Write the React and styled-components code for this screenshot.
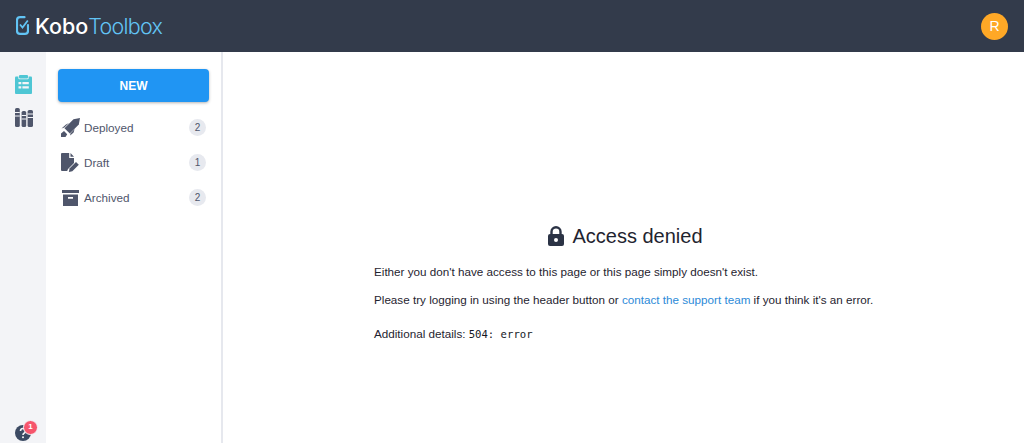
import React from 'react';
import styled, { createGlobalStyle } from 'styled-components';

const GlobalStyle = createGlobalStyle`
    html, body {
        margin: 0;
        padding: 0;
        height: 100%;
        background: #fff;
        font-family: 'Liberation Sans', Arial, sans-serif;
        overflow: hidden;
    }
    #root {
        height: 100%;
    }
`;

const Page = styled.div`
    display: flex;
    flex-direction: column;
    height: 443px;
`;

const Header = styled.header`
    display: flex;
    align-items: center;
    justify-content: space-between;
    flex: 0 0 52px;
    height: 52px;
    padding: 0 16px;
    box-sizing: border-box;
    background: #333b4b;
`;

const Logo = styled.div`
    display: flex;
    align-items: center;
    gap: 6px;
    margin-top: -1px;
`;

const LogoText = styled.div`
    font-family: 'Inter', sans-serif;
    font-size: 21.5px;
    line-height: 26px;
    letter-spacing: -0.75px;
    color: #62c4f5;
    font-weight: 300;
`;

const LogoStrong = styled.span`
    color: #fff;
    font-weight: 500;
    letter-spacing: 0;
`;

const Avatar = styled.div`
    display: flex;
    align-items: center;
    justify-content: center;
    width: 27px;
    height: 27px;
    border-radius: 50%;
    background: #ffa826;
    color: #fff;
    font-size: 14px;
`;

const Body = styled.div`
    display: flex;
    flex: 1;
    min-height: 0;
`;

const Rail = styled.nav`
    display: flex;
    flex-direction: column;
    align-items: center;
    flex: 0 0 46px;
    padding: 23px 0 0 1px;
    box-sizing: border-box;
    background: #f3f4f7;
`;

const RailButton = styled.div`
    display: flex;
    justify-content: center;
    width: 100%;
    height: 20px;
    margin-bottom: 13px;
`;

const HelpButton = styled.div`
    position: relative;
    margin-top: auto;
    margin-left: -1px;
    width: 16px;
    height: 16px;
    margin-bottom: 2px;
`;

const HelpBadge = styled.span`
    position: absolute;
    top: -5px;
    left: 8px;
    box-sizing: border-box;
    width: 15px;
    height: 15px;
    border-radius: 50%;
    border: 1.5px solid #f3f4f7;
    background: #f6556c;
    color: #fff;
    font-size: 8px;
    line-height: 12px;
    text-align: center;
    font-weight: 700;
`;

const Sidebar = styled.aside`
    flex: 0 0 176px;
    padding: 17px 12px 0 12px;
    box-sizing: border-box;
    border-right: 2px solid #e6e8ee;
`;

const NewButton = styled.button`
    display: block;
    width: 151px;
    height: 33px;
    margin-bottom: 8px;
    border: 0;
    border-radius: 4px;
    background: #2095f3;
    color: #fff;
    font-family: inherit;
    font-size: 12px;
    font-weight: 700;
    box-shadow: 0 1px 3px rgba(0, 0, 0, 0.3);
`;

const Row = styled.div`
    display: flex;
    align-items: center;
    height: 35px;
    padding: 0 3px 0 2px;
    color: #4f566b;
    font-size: 11.7px;
`;

const RowIcon = styled.div`
    display: flex;
    align-items: center;
    justify-content: center;
    width: 20px;
    height: 20px;
    margin-right: 4px;
`;

const RowLabel = styled.span`
    flex: 1;
`;

const Count = styled.span`
    width: 17px;
    height: 17px;
    border-radius: 50%;
    background: #e7e9ef;
    color: #4f566b;
    font-size: 10px;
    line-height: 17px;
    text-align: center;
`;

const Main = styled.main`
    display: flex;
    flex: 1;
    align-items: center;
    justify-content: center;
    padding: 70px 0 0 1px;
    box-sizing: border-box;
`;

const Message = styled.section`
    width: 500px;
    color: #1f2430;
    font-size: 11.68px;
`;

const Title = styled.h1`
    display: flex;
    align-items: center;
    justify-content: center;
    gap: 7px;
    margin: 0 0 16px 2px;
    font-size: 20px;
    font-weight: 400;
    line-height: 24px;
`;

const Paragraph = styled.p`
    margin: 0 0 13px;
    line-height: 15px;
    white-space: nowrap;
`;

const Details = styled(Paragraph)`
    margin: 19px 0 0;
`;

const SupportLink = styled.a`
    color: #2d8ad8;
    text-decoration: none;
`;

const Code = styled.code`
    font-family: 'DejaVu Sans Mono', monospace;
    font-size: 10.6px;
    color: #14181f;
`;

const KoboMark = () => (
    <svg width="13" height="19" viewBox="0 0 13 19" fill="none" stroke="#62c4f5" strokeWidth="2.2">
        <path d="M8.5 1.2H4a3 3 0 0 0-3 3v10.6a3 3 0 0 0 3 3h5a3 3 0 0 0 3-3V9" strokeLinecap="round" />
        <path d="M4 8.5l2.5 3L11.8 4.5" strokeWidth="1.8" />
    </svg>
);

const FormsIcon = () => (
    <svg width="17" height="19" viewBox="0 0 17 19">
        <rect x="0" y="1.5" width="17" height="17.5" rx="1" fill="#4ec6d4" />
        <rect x="3.4" y="0" width="10.2" height="4.2" rx="1" fill="#f3f4f7" />
        <rect x="4" y="0" width="9" height="3.6" rx="1" fill="#4ec6d4" />
        <path fill="#f3f4f7" d="M3.5 7h2.8v2.2H3.5zM7.4 7h6.4v2.2H7.4zM3.5 11.2h2.8v2.2H3.5zM7.4 11.2h6.4v2.2H7.4z" />
    </svg>
);

const LibraryIcon = () => (
    <svg width="18" height="19" viewBox="0 0 18 19" fill="#4f566b">
        <rect x="0" y="0" width="4.8" height="19" rx="1.6" />
        <rect x="6.6" y="3" width="4.6" height="16" rx="1.6" />
        <rect x="12.6" y="2" width="5.4" height="17" rx="1.6" />
        <path fill="#f3f4f7" d="M0 4h4.8v1H0zM0 7.5h4.8v1H0zM6.6 7h4.6v1H6.6zM6.6 10.5h4.6v1H6.6zM12.6 5.5h5.4v1h-5.4zM12.6 9h5.4v1h-5.4z" />
    </svg>
);

const RocketIcon = () => (
    <svg width="19" height="19" viewBox="0 0 19 19" fill="#4f566b">
        <path d="M19 0l-1.2 6.5-9 9-5.3-5.3 9-9z" />
        <path d="M5 6.5L8 5 3.4 9.6 0.5 10.5zM13.6 11l-1 3.4-3.4 3.2.2-2.2z" />
        <path d="M3 13l3.2 3.2L4.5 19H0v-3.6z" />
    </svg>
);

const DraftIcon = () => (
    <svg width="18" height="19" viewBox="0 0 18 19" fill="#4f566b">
        <path d="M0 1a1 1 0 0 1 1-1h7.2v5H13v5L7 16l-.8 2H1a1 1 0 0 1-1-1z" />
        <path d="M9.5 0L13 3.8H9.5z" />
        <path d="M8.5 15.5l6.5-6.5 2.8 2.8-6.5 6.5-3.4.7z" />
    </svg>
);

const ArchiveIcon = () => (
    <svg width="17" height="16" viewBox="0 0 17 16" fill="#4f566b">
        <path d="M0 0h17v3H0z" />
        <path fillRule="evenodd" d="M1 4.5h15V16H1zM6 7v1.8h5V7z" />
    </svg>
);

const LockIcon = () => (
    <svg width="18" height="20" viewBox="0 0 18 20">
        <path fill="none" stroke="#2b3345" strokeWidth="2.4" d="M4.5 9V5.7a4.5 4.5 0 0 1 9 0V9" />
        <rect x="1" y="8" width="16" height="12" rx="2" fill="#2b3345" />
        <circle cx="9" cy="14" r="2" fill="#fff" />
    </svg>
);

const HelpIcon = () => (
    <svg width="16" height="16" viewBox="0 0 16 16">
        <circle cx="8" cy="8" r="8" fill="#3c4a63" />
        <path fill="none" stroke="#f3f4f7" strokeWidth="1.6" d="M5.5 6a2.5 2.5 0 1 1 3.5 2.3C8.2 8.7 8 9.2 8 10" />
        <circle cx="8" cy="12.3" r="1" fill="#f3f4f7" />
    </svg>
);

const rows = [
    { label: 'Deployed', count: 2, icon: <RocketIcon /> },
    { label: 'Draft', count: 1, icon: <DraftIcon /> },
    { label: 'Archived', count: 2, icon: <ArchiveIcon /> },
];

export default function App() {
    return (
        <Page>
            <GlobalStyle />
            <Header>
                <Logo>
                    <KoboMark />
                    <LogoText>
                        <LogoStrong>Kobo</LogoStrong>Toolbox
                    </LogoText>
                </Logo>
                <Avatar>R</Avatar>
            </Header>
            <Body>
                <Rail>
                    <RailButton>
                        <FormsIcon />
                    </RailButton>
                    <RailButton>
                        <LibraryIcon />
                    </RailButton>
                    <HelpButton>
                        <HelpIcon />
                        <HelpBadge>1</HelpBadge>
                    </HelpButton>
                </Rail>
                <Sidebar>
                    <NewButton>NEW</NewButton>
                    {rows.map((row) => (
                        <Row key={row.label}>
                            <RowIcon>{row.icon}</RowIcon>
                            <RowLabel>{row.label}</RowLabel>
                            <Count>{row.count}</Count>
                        </Row>
                    ))}
                </Sidebar>
                <Main>
                    <Message>
                        <Title>
                            <LockIcon />
                            Access denied
                        </Title>
                        <Paragraph>Either you don't have access to this page or this page simply doesn't exist.</Paragraph>
                        <Paragraph>
                            Please try logging in using the header button or{' '}
                            <SupportLink href="#">contact the support team</SupportLink> if you think it's an error.
                        </Paragraph>
                        <Details>
                            Additional details: <Code>504: error</Code>
                        </Details>
                    </Message>
                </Main>
            </Body>
        </Page>
    );
}
